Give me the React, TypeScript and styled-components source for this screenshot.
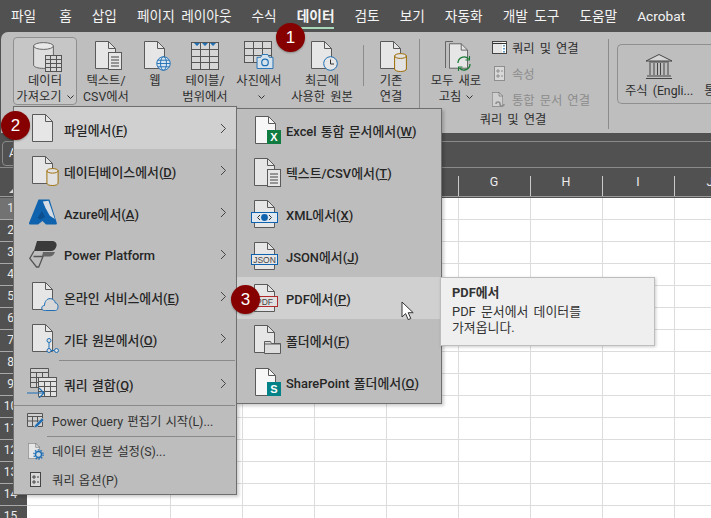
import * as React from 'react';
import styled, { createGlobalStyle } from 'styled-components';

const GlobalStyle = createGlobalStyle`
	html, body {
		margin: 0;
		padding: 0;
		width: 711px;
		height: 518px;
		overflow: hidden;
		background: #ffffff;
		font-family: Roboto, "Noto Sans CJK KR", "Liberation Sans", sans-serif;
	}
`

const Page = styled.div`
	position: relative;
	width: 711px;
	height: 518px;
	overflow: hidden;
	background: #515151;
	display: flex;
	flex-direction: column;
`

const TabBar = styled.div`
	height: 32px;
	flex: none;
	display: flex;
	align-items: center;
	padding: 0 0 1px 11px;
	gap: 20px;
	box-sizing: border-box;
`

const Tab = styled.div<{ $active?: boolean }>`
	position: relative;
	font-size: 13.7px;
	line-height: 20px;
	word-spacing: 3px;
	color: #f4f4f4;
	white-space: nowrap;
	font-weight: ${p => (p.$active ? 700 : 400)};

	&:first-child {
		margin-right: 3px;
	}

	&::after {
		content: '';
		display: ${p => (p.$active ? 'block' : 'none')};
		position: absolute;
		left: 0;
		right: 0;
		bottom: -3px;
		height: 2px;
		background: #a8d8b9;
	}
`

const Ribbon = styled.div`
	height: 101px;
	flex: none;
	margin-left: 1px;
	background: #bebebe;
	border-radius: 7px 0 0 0;
	box-sizing: border-box;
	padding: 5px 0 0 12px;
	display: flex;
	overflow: hidden;
`

const RibbonButton = styled.div<{ $w: number; $framed?: boolean }>`
	width: ${p => p.$w}px;
	height: 68px;
	flex: none;
	box-sizing: border-box;
	display: flex;
	flex-direction: column;
	align-items: center;
	border: 1px solid ${p => (p.$framed ? '#8f8f8f' : 'transparent')};
	border-radius: 4px;
	background: ${p => (p.$framed ? '#c6c6c6' : 'transparent')};
	font-size: 12.3px;
	line-height: 16px;
	word-spacing: 2px;
	color: #2f2f2f;
	text-align: center;
	white-space: nowrap;
`

const RibbonIcon = styled.div<{ $dx?: number }>`
	height: 35px;
	flex: none;
	display: flex;
	align-items: center;
	justify-content: center;
	margin-left: ${p => (p.$dx ?? 0) * 2}px;
`

const Caret = styled.svg`
	margin-left: 5px;
	vertical-align: 2px;
`

const Divider = styled.div<{ $h: number; $mt: number; $mx: number }>`
	width: 1px;
	height: ${p => p.$h}px;
	flex: none;
	background: #8c8c8c;
	margin: ${p => p.$mt}px ${p => p.$mx}px 0;
`

const QueryGroup = styled.div`
	flex: none;
	width: 180px;
	display: flex;
	flex-direction: column;
`

const QueryTop = styled.div`
	display: flex;
	height: 75px;
`

const SmallColumn = styled.div`
	display: flex;
	flex-direction: column;
	gap: 5px;
	margin-left: 2px;
`

const SmallRow = styled.div<{ $off?: boolean }>`
	height: 21px;
	display: flex;
	align-items: center;
	gap: 5px;
	font-size: 12.3px;
	word-spacing: 2px;
	white-space: nowrap;
	color: ${p => (p.$off ? '#8c8c8c' : '#2f2f2f')};
`

const SmallIcon = styled.div`
	width: 16px;
	flex: none;
	display: flex;
	justify-content: center;
`

const GroupLabel = styled.div`
	font-size: 12.3px;
	line-height: 16px;
	word-spacing: 2px;
	color: #2f2f2f;
	text-align: center;
`

const StockCard = styled.div`
	width: 140px;
	height: 60px;
	flex: none;
	margin: 7px 0 0 3px;
	box-sizing: border-box;
	border: 1px solid #8f8f8f;
	border-right: none;
	border-radius: 5px 0 0 5px;
	padding: 9px 0 4px 7px;
	display: flex;
	gap: 11px;
	font-size: 12.3px;
	line-height: 16px;
	word-spacing: 2px;
	color: #2f2f2f;
	white-space: nowrap;
`

const StockItem = styled.div`
	display: flex;
	flex-direction: column;
	align-items: center;
	justify-content: space-between;
`

const FormulaStrip = styled.div`
	position: relative;
	height: 35px;
	flex: none;
	box-sizing: border-box;
	padding-top: 8px;
	border-bottom: 1px solid #8a8a8a;
`

const FormulaLine = styled.div`
	height: 27px;
	border-top: 1px solid #8a8a8a;
	margin-left: 5px;
`

const NameBox = styled.div`
	position: absolute;
	left: 2px;
	top: 8px;
	width: 40px;
	height: 25px;
	box-sizing: border-box;
	border: 1px solid #8a8a8a;
	border-radius: 4px;
	background: #515151;
	color: #ececec;
	font-size: 12px;
	line-height: 23px;
	padding-left: 6px;
`

const ColumnHeader = styled.div`
	position: relative;
	height: 29px;
	flex: none;
	display: flex;
	background: #515151;
	border-bottom: 1px solid #9a9a9a;
	box-sizing: border-box;
	padding-left: 26px;
`

const CornerMark = styled.div`
	position: absolute;
	left: 9px;
	bottom: 3px;
	width: 0;
	height: 0;
	border-left: 5px solid transparent;
	border-bottom: 5px solid #d8d8d8;
`

const ColumnCell = styled.div`
	width: 72px;
	flex: none;
	box-sizing: border-box;
	color: #ececec;
	font-size: 12.5px;
	line-height: 28px;
	text-align: center;
	position: relative;

	&::before {
		content: '';
		position: absolute;
		left: 0;
		top: 8px;
		bottom: 0;
		width: 1px;
		background: #c9c9c9;
	}
`

const Sheet = styled.div`
	flex: 1;
	display: flex;
	min-height: 0;
	padding-top: 1px;
`

const RowHeader = styled.div`
	width: 27px;
	flex: none;
	display: flex;
	flex-direction: column;
`

const RowNumber = styled.div<{ $first?: boolean }>`
	height: 22px;
	flex: none;
	box-sizing: border-box;
	border-bottom: 1px solid #a8a8a8;
	background: ${p => (p.$first ? '#727272' : '#515151')};
	color: #ececec;
	font-size: 12px;
	line-height: 21px;
	padding-right: 6px;
	text-align: center;
`

const Cells = styled.div`
	flex: 1;
	background-color: #ffffff;
	background-image:
		linear-gradient(to right, #dcdcdc 1px, transparent 1px),
		linear-gradient(to bottom, #dcdcdc 1px, transparent 1px);
	background-size: 72px 22px;
	background-position: -1px -1px;
`

const Menu = styled.div<{ $x: number; $y: number; $w: number }>`
	position: absolute;
	left: ${p => p.$x}px;
	top: ${p => p.$y}px;
	width: ${p => p.$w}px;
	box-sizing: border-box;
	background: #bdbdbd;
	border: 1px solid #6e6e6e;
	box-shadow: 2px 2px 3px rgba(0, 0, 0, 0.2);
	display: flex;
	flex-direction: column;
`

const MenuRow = styled.div<{ $hot?: boolean; $pad: number; $h?: number }>`
	height: ${p => p.$h ?? 42}px;
	flex: none;
	display: flex;
	align-items: center;
	box-sizing: border-box;
	padding-left: ${p => p.$pad}px;
	background: ${p => (p.$hot ? '#d0d0d0' : 'transparent')};
`

const MenuIcon = styled.div<{ $shift?: number }>`
	width: 32px;
	flex: none;
	display: flex;
	align-items: center;
	margin-left: ${p => p.$shift ?? 0}px;
	margin-right: ${p => -(p.$shift ?? 0)}px;
`

const MenuLabel = styled.div<{ $drop?: number }>`
	font-size: 12.9px;
	font-weight: 500;
	color: #262626;
	white-space: nowrap;
	word-spacing: 1px;
	flex: 1;
	padding-top: ${p => p.$drop ?? 0}px;
`

const Key = styled.span`
	text-decoration: underline;
	text-underline-offset: 1px;
`

const Arrow = styled.svg`
	flex: none;
	margin-right: 9px;
`

const MenuRule = styled.div<{ $left: number; $top?: number }>`
	height: 1px;
	flex: none;
	margin-top: ${p => p.$top ?? 0}px;
	margin-left: ${p => p.$left}px;
	margin-right: 1px;
	background: #8a8a8a;
`

const FlatRow = styled.div<{ $h: number }>`
	height: ${p => p.$h}px;
	flex: none;
	display: flex;
	align-items: center;
	padding-left: 13px;
	gap: 8px;
	font-size: 12.4px;
	word-spacing: 1px;
	color: #333333;
	white-space: nowrap;
`

const FlatIcon = styled.div`
	width: 17px;
	flex: none;
	display: flex;
	justify-content: center;
`

const Tooltip = styled.div`
	position: absolute;
	left: 440px;
	top: 277px;
	width: 215px;
	height: 69px;
	box-sizing: border-box;
	background: #efefef;
	border: 1px solid #bdbdbd;
	box-shadow: 1px 1px 3px rgba(0, 0, 0, 0.2);
	padding: 6px 11px;
	color: #333333;
`

const TooltipTitle = styled.div`
	font-size: 12.9px;
	font-weight: 700;
	line-height: 17px;
	margin-bottom: 3px;
`

const TooltipBody = styled.div`
	font-size: 12.9px;
	line-height: 16px;
	word-spacing: 2px;
`

const Badge = styled.div<{ $x: number; $y: number }>`
	position: absolute;
	left: ${p => p.$x}px;
	top: ${p => p.$y}px;
	width: 29px;
	height: 29px;
	border-radius: 50%;
	background: #860000;
	color: #ffffff;
	font-family: "Liberation Sans", sans-serif;
	font-size: 17px;
	line-height: 29px;
	text-align: center;
	box-shadow: 0 1px 2px rgba(0, 0, 0, 0.3);
`

const Cursor = styled.svg`
	position: absolute;
	left: 401px;
	top: 301px;
`

const Stack = styled.div<{ $w: number; $h: number }>`
	position: relative;
	width: ${p => p.$w}px;
	height: ${p => p.$h}px;
	flex: none;
`

const Overlay = styled.div<{ $x: number; $y: number }>`
	position: absolute;
	left: ${p => p.$x}px;
	top: ${p => p.$y}px;
	line-height: 0;
`

const PageIcon = ({ fill = '#e6e6e6', w = 21, h = 28 }: { fill?: string; w?: number; h?: number }) => (
	<svg width={w} height={h} viewBox="0 0 21 28" style={{ display: 'block' }}>
		<path d="M.5.5h13l7 7v20H.5z" fill={fill} stroke="#5a5a5a" />
		<path d="M13.5.5v7h7" fill="none" stroke="#5a5a5a" />
	</svg>
)

const Cylinder = ({ w = 13, h = 19 }: { w?: number; h?: number }) => (
	<svg width={w} height={h} viewBox="0 0 13 19">
		<path d="M.6 3v13c0 1.5 2.6 2.5 5.9 2.5s5.9-1 5.9-2.5V3z" fill="#e2e2e2" stroke="#9c6a00" />
		<ellipse cx="6.5" cy="3" rx="5.9" ry="2.4" fill="#e2e2e2" stroke="#9c6a00" />
	</svg>
)

const TextLines = () => (
	<svg width="14" height="18" viewBox="0 0 14 18">
		<rect x=".5" y=".5" width="13" height="17" fill="#e6e6e6" stroke="#5a5a5a" />
		<path d="M3 5h8M3 8h8M3 11h8M3 14h8" stroke="#444" />
	</svg>
)

const LetterTile = ({ color, letter }: { color: string; letter: string }) => (
	<svg width="14" height="14" viewBox="0 0 14 14">
		<rect width="14" height="14" fill={color} />
		<text x="7" y="11" fontSize="11" fontWeight="700" textAnchor="middle" fill="#fff" fontFamily="Liberation Sans, sans-serif">{letter}</text>
	</svg>
)

const DatabaseFileIcon = () => (
	<Stack $w={28} $h={28}>
		<PageIcon />
		<Overlay $x={14} $y={12}><Cylinder h={18} /></Overlay>
	</Stack>
)

const AzureIcon = () => (
	<svg width="28" height="26" viewBox="0 0 28 26" style={{ display: 'block' }}>
		<path d="M9.500.5h11L27.800 24c.2.800-.2 1.500-1 1.500H17l-3.500-3.500-4.500 3.500H1c-.8 0-1.200-.7-1-1.500z" fill="#0f63ae" />
		<path d="M13.800 2.500l5.700-.8 6.300 18.300-5-3.200-4.300-7.800z" fill="#d6dde4" />
		<path d="M13 12l3 6-4.500 2.500-3-1.500z" fill="#0b4f90" />
	</svg>
)

const PowerIcon = () => (
	<svg width="28" height="28" viewBox="0 0 28 28" style={{ display: 'block' }}>
		<path d="M8 1h15c3.500 0 5 2.500 4.500 5-.6 3-3 5-5.500 5H5z" fill="#3a3a3a" />
		<path d="M14 12h12c-1 2.500-2.800 4.500-5 4.500h-8z" fill="#666666" />
		<path d="M5 11L.8 18.500 7.500 27h2.200L14 16.500H4.500" fill="none" stroke="#555555" strokeWidth="1.300" />
	</svg>
)

const CloudFileIcon = () => (
	<Stack $w={28} $h={28}>
		<PageIcon />
		<Overlay $x={9} $y={16}>
			<svg width="18" height="13" viewBox="0 0 18 13">
				<path d="M4.500 12.500H3.500c-3.700 0-3.700-5 0-5C3.500 3.500 6 .6 9 .6s4.800 2 5.400 4.400c3.500 0 3.500 7.500 0 7.500z" fill="#d8d8d8" stroke="#1f6fb5" />
			</svg>
		</Overlay>
	</Stack>
)

const NodesFileIcon = () => (
	<Stack $w={28} $h={28}>
		<PageIcon />
		<Overlay $x={12} $y={14}>
			<svg width="15" height="15" viewBox="0 0 15 15">
				<path d="M5 4.500v6M5 12.500h5" stroke="#1f6fb5" fill="none" />
				<circle cx="5" cy="2.500" r="2" fill="#ddd" stroke="#1f6fb5" />
				<circle cx="5" cy="12.500" r="2" fill="#ddd" stroke="#1f6fb5" />
				<circle cx="12.500" cy="12.500" r="2" fill="#ddd" stroke="#1f6fb5" />
			</svg>
		</Overlay>
	</Stack>
)

const CombineIcon = () => (
	<svg width="31" height="30" viewBox="0 0 31 30" style={{ display: 'block' }}>
		<path d="M3.500.5h18v4h-18zM3.500 4.500h18v15h-18zM3.500 9.500h18M3.500 14.500h18M9.500 4.500v15M15.500 4.500v15" fill="#d2d2d2" stroke="#555" />
		<path d="M11.500 9.500h18v19h-18z" fill="#e2e2e2" stroke="#555" />
		<path d="M11.500 9.500h18v4h-18zM11.500 18.500h18M11.500 23.500h18M17.500 13.500v15M23.500 13.500v15" fill="none" stroke="#555" />
		<path d="M0 25h16M12 20l5 5-5 5" fill="none" stroke="#1f6fb5" strokeWidth="1.200" />
	</svg>
)

const TileFileIcon = ({ color, letter }: { color: string; letter: string }) => (
	<Stack $w={28} $h={30}>
		<Overlay $x={1} $y={1}><PageIcon fill="#f7f7f7" /></Overlay>
		<Overlay $x={13} $y={15}><LetterTile color={color} letter={letter} /></Overlay>
	</Stack>
)

const TextFileIcon = () => (
	<Stack $w={28} $h={29}>
		<PageIcon />
		<Overlay $x={13} $y={11}><TextLines /></Overlay>
	</Stack>
)

const BandFileIcon = ({ label, color, fill }: { label: string; color: string; fill: string }) => (
	<Stack $w={28} $h={28}>
		<PageIcon />
		<Overlay $x={-3} $y={12}>
			<svg width="27" height="11" viewBox="0 0 27 11">
				<rect x=".5" y=".5" width="26" height="10" fill={fill} stroke={color} />
				<text x="13.500" y="9" fontSize="8.500" textAnchor="middle" fill="#444" fontFamily="Liberation Sans, sans-serif">{label}</text>
			</svg>
		</Overlay>
	</Stack>
)

const XmlFileIcon = () => (
	<Stack $w={28} $h={28}>
		<PageIcon />
		<Overlay $x={-3} $y={12}>
			<svg width="27" height="11" viewBox="0 0 27 11">
				<rect x=".5" y=".5" width="26" height="10" fill="#dfe8f0" stroke="#0f62ad" />
				<circle cx="13.500" cy="5.500" r="3.400" fill="#0f62ad" />
				<path d="M9 3L6.500 5.500 9 8M18 3l2.500 2.500L18 8" fill="none" stroke="#333" />
			</svg>
		</Overlay>
	</Stack>
)

const FolderFileIcon = () => (
	<Stack $w={28} $h={30}>
		<PageIcon />
		<Overlay $x={10} $y={16}>
			<svg width="17" height="13" viewBox="0 0 17 13">
				<path d="M.5 12.500v-12h6l1 2h9v10z" fill="#dcdcdc" stroke="#5a5a5a" />
				<path d="M.5 3h16" stroke="#5a5a5a" />
			</svg>
		</Overlay>
	</Stack>
)

const MenuArrow = () => (
	<Arrow width="7" height="11" viewBox="0 0 7 11">
		<path d="M1 1l4.500 4.500L1 10" fill="none" stroke="#444" />
	</Arrow>
)

const CaretIcon = () => (
	<Caret width="7" height="4" viewBox="0 0 7 4">
		<path d="M.5.500l3 3 3-3" fill="none" stroke="#333" />
	</Caret>
)

const GridIcon = ({ w, h, cols, rows }: { w: number; h: number; cols: number; rows: number }) => {
	const lines: string[] = []
	for (let i = 1; i < cols; i++) lines.push(`M${Math.round((i * w) / cols) + 0.5} 0v${h}`)
	for (let i = 1; i < rows; i++) lines.push(`M0 ${Math.round((i * h) / rows) + 0.5}h${w}`)
	return (
		<svg width={w + 1} height={h + 1} viewBox={`0 0 ${w + 1} ${h + 1}`} style={{ display: 'block' }}>
			<rect x=".5" y=".5" width={w} height={h} fill="#d6d6d6" stroke="#555" />
			<path d={lines.join('')} stroke="#555" fill="none" />
		</svg>
	)
}

const DataIcon = () => (
	<Stack $w={24} $h={28}>
		<svg width="21" height="27" viewBox="0 0 21 27" style={{ display: 'block' }}>
			<path d="M.6 4v19c0 2 4.400 3.400 9.900 3.400s9.900-1.400 9.900-3.400V4z" fill="#dedede" stroke="#666" />
			<ellipse cx="10.500" cy="4" rx="9.900" ry="3.400" fill="#e8e8e8" stroke="#666" />
		</svg>
		<Overlay $x={12} $y={13}><GridIcon w={16} h={16} cols={3} rows={4} /></Overlay>
	</Stack>
)

const TableIcon = () => (
	<Stack $w={29} $h={28}>
		<GridIcon w={27} h={27} cols={3} rows={4} />
		<Overlay $x={2} $y={1}>
			<svg width="24" height="4" viewBox="0 0 24 4">
				<path d="M1 0h6L4 3zM9 0h6l-3 3zM17 0h6l-3 3z" fill="#1f6fb5" />
			</svg>
		</Overlay>
	</Stack>
)

const WebFileIcon = () => (
	<Stack $w={28} $h={30}>
		<PageIcon />
		<Overlay $x={12} $y={15}>
			<svg width="15" height="15" viewBox="0 0 16 16">
				<circle cx="8" cy="8" r="7.200" fill="#d8e4ee" stroke="#1f6fb5" />
				<ellipse cx="8" cy="8" rx="3.200" ry="7.200" fill="none" stroke="#1f6fb5" />
				<path d="M1 8h14M2 4.500h12M2 11.500h12" stroke="#1f6fb5" fill="none" />
			</svg>
		</Overlay>
	</Stack>
)

const CameraIcon = () => (
	<Stack $w={31} $h={30}>
		<GridIcon w={27} h={21} cols={3} rows={3} />
		<Overlay $x={12} $y={13}>
			<svg width="18" height="15" viewBox="0 0 18 16">
				<path d="M.5 15.500v-12h4l1.500-3h6l1.500 3h4v12z" fill="#d5e2ec" stroke="#1f6fb5" />
				<circle cx="9" cy="9" r="3.500" fill="none" stroke="#1f6fb5" strokeWidth="1.300" />
			</svg>
		</Overlay>
	</Stack>
)

const ClockFileIcon = () => (
	<Stack $w={28} $h={30}>
		<PageIcon />
		<Overlay $x={12} $y={15}>
			<svg width="15" height="15" viewBox="0 0 15 15">
				<circle cx="7.500" cy="7.500" r="6.800" fill="#e6e6e6" stroke="#1f6fb5" />
				<path d="M7.500 3.500v4.500h3.500" fill="none" stroke="#333" />
			</svg>
		</Overlay>
	</Stack>
)

const ExistingIcon = () => (
	<Stack $w={28} $h={30}>
		<PageIcon />
		<Overlay $x={14} $y={12}><Cylinder h={19} /></Overlay>
	</Stack>
)

const RefreshIcon = () => (
	<Stack $w={28} $h={30}>
		<Overlay $x={0} $y={0}>
			<svg width="8" height="27" viewBox="0 0 8 27"><path d="M.5 27V.5H8" fill="none" stroke="#666" /></svg>
		</Overlay>
		<Overlay $x={4} $y={2}><PageIcon w={19} h={26} /></Overlay>
		<Overlay $x={11} $y={14}>
			<svg width="16" height="17" viewBox="0 0 16 17">
				<path d="M2 8a6 6 0 0 1 10.500-4M14 9a6 6 0 0 1-10.500 4" fill="none" stroke="#1a7a35" strokeWidth="1.300" />
				<path d="M13.500 1v4h-4M2.500 16v-4h4" fill="none" stroke="#1a7a35" strokeWidth="1.100" />
			</svg>
		</Overlay>
	</Stack>
)

const PaneIcon = () => (
	<svg width="15" height="13" viewBox="0 0 15 13">
		<rect x=".5" y=".5" width="14" height="12" fill="#e6e6e6" stroke="#444" />
		<rect x="10" y="1" width="4" height="11" fill="#fff" />
		<path d="M.5 2.500h14" stroke="#333" />
		<path d="M12 4v1.500M12 7v1.500M12 10v1.500" stroke="#1f6fb5" strokeWidth="1.400" />
	</svg>
)

const PropsIcon = ({ stroke = '#8e8e8e' }: { stroke?: string }) => (
	<svg width="11" height="15" viewBox="0 0 11 15" style={{ display: 'block' }}>
		<rect x=".5" y=".5" width="10" height="14" fill="#d8d8d8" stroke={stroke} />
		<path d="M3 4h2v2H3zM7 5h2M3 9h2v2H3zM7 10h2" fill="none" stroke={stroke} />
	</svg>
)

const LinkIcon = () => (
	<Stack $w={14} $h={16}>
		<PageIcon w={11} h={15} fill="#cfcfcf" />
		<Overlay $x={2} $y={8}>
			<svg width="12" height="8" viewBox="0 0 12 8"><path d="M2 4a2 2 0 0 1 4 0 2 2 0 0 0 4 0" fill="none" stroke="#8e8e8e" strokeWidth="1.600" /></svg>
		</Overlay>
	</Stack>
)

const BankIcon = () => (
	<svg width="28" height="25" viewBox="0 0 28 25" style={{ display: 'block' }}>
		<path d="M14 .5L27 7H1z" fill="#d6d6d6" stroke="#444" />
		<path d="M4 8h20M5 9v12M9 9v12M12.500 9v12M15.500 9v12M19 9v12M23 9v12M2 22h24M1 24.500h26" fill="none" stroke="#444" />
	</svg>
)

const EditorIcon = () => (
	<svg width="17" height="16" viewBox="0 0 17 16" style={{ display: 'block' }}>
		<path d="M.5.5h15v13H.5zM.5 3.500h15M.5 8h15M5.500 3.500v10M10.500 3.500v10" fill="#d0d0d0" stroke="#555" />
		<path d="M7 15l1-3 7-7 2 2-7 7z" fill="#1f6fb5" stroke="#bdbdbd" strokeWidth=".6" />
	</svg>
)

const SettingsFileIcon = () => (
	<Stack $w={16} $h={17}>
		<PageIcon w={12} h={16} />
		<Overlay $x={5} $y={6}>
			<svg width="11" height="11" viewBox="0 0 11 11">
				<circle cx="5.500" cy="5.500" r="3" fill="#cfd9e2" stroke="#1f6fb5" strokeWidth="1.400" />
				<circle cx="5.500" cy="5.500" r="4.600" fill="none" stroke="#1f6fb5" strokeDasharray="1.400 1.500" strokeWidth="1.400" />
			</svg>
		</Overlay>
	</Stack>
)

const tabs = ['파일', '홈', '삽입', '페이지 레이아웃', '수식', '데이터', '검토', '보기', '자동화', '개발 도구', '도움말', 'Acrobat']
const columns = ['', '', '', '', '', '', 'G', 'H', 'I', 'J']
const rows = Array.from({ length: 15 }, (_, i) => i + 1)

const primaryItems: { icon: React.ReactNode; label: string; hotkey?: string; hot?: boolean; shift?: number }[] = [
	{ icon: <PageIcon />, label: '파일에서', hotkey: 'F', hot: true },
	{ icon: <DatabaseFileIcon />, label: '데이터베이스에서', hotkey: 'D' },
	{ icon: <AzureIcon />, label: 'Azure에서', hotkey: 'A', shift: -3 },
	{ icon: <PowerIcon />, label: 'Power Platform', shift: -3 },
	{ icon: <CloudFileIcon />, label: '온라인 서비스에서', hotkey: 'E' },
	{ icon: <NodesFileIcon />, label: '기타 원본에서', hotkey: 'O' },
]

const fileItems: { icon: React.ReactNode; label: string; hotkey: string; hot?: boolean }[] = [
	{ icon: <TileFileIcon color="#107c41" letter="X" />, label: 'Excel 통합 문서에서', hotkey: 'W' },
	{ icon: <TextFileIcon />, label: '텍스트/CSV에서', hotkey: 'T' },
	{ icon: <XmlFileIcon />, label: 'XML에서', hotkey: 'X' },
	{ icon: <BandFileIcon label="JSON" color="#0f62ad" fill="#e6e6e6" />, label: 'JSON에서', hotkey: 'J' },
	{ icon: <BandFileIcon label="PDF" color="#b02a2a" fill="#e0e0e0" />, label: 'PDF에서', hotkey: 'P', hot: true },
	{ icon: <FolderFileIcon />, label: '폴더에서', hotkey: 'F' },
	{ icon: <TileFileIcon color="#038387" letter="S" />, label: 'SharePoint 폴더에서', hotkey: 'O' },
]

const Label = ({ text, hotkey, drop }: { text: string; hotkey?: string; drop?: number }) => (
	<MenuLabel $drop={drop}>
		{text}
		{hotkey && <>(<Key>{hotkey}</Key>)</>}
	</MenuLabel>
)

export default function App() {
	return (
		<Page>
			<GlobalStyle />
			<TabBar>
				{tabs.map(t => <Tab key={t} $active={t === '데이터'}>{t}</Tab>)}
			</TabBar>

			<Ribbon>
				<RibbonButton $w={64} $framed>
					<RibbonIcon><DataIcon /></RibbonIcon>
					<div>데이터</div>
					<div>가져오기<CaretIcon /></div>
				</RibbonButton>
				<RibbonButton $w={58}>
					<RibbonIcon $dx={3}><TextFileIcon /></RibbonIcon>
					<div>텍스트/</div>
					<div>CSV에서</div>
				</RibbonButton>
				<RibbonButton $w={40}>
					<RibbonIcon $dx={3}><WebFileIcon /></RibbonIcon>
					<div>웹</div>
				</RibbonButton>
				<RibbonButton $w={60}>
					<RibbonIcon><TableIcon /></RibbonIcon>
					<div>테이블/</div>
					<div>범위에서</div>
				</RibbonButton>
				<RibbonButton $w={48}>
					<RibbonIcon><CameraIcon /></RibbonIcon>
					<div>사진에서</div>
					<div><CaretIcon /></div>
				</RibbonButton>
				<RibbonButton $w={78}>
					<RibbonIcon $dx={3}><ClockFileIcon /></RibbonIcon>
					<div>최근에</div>
					<div>사용한 원본</div>
				</RibbonButton>
				<Divider $h={41} $mt={8} $mx={2} />
				<RibbonButton $w={50}>
					<RibbonIcon $dx={3}><ExistingIcon /></RibbonIcon>
					<div>기존</div>
					<div>연결</div>
				</RibbonButton>
				<Divider $h={90} $mt={2} $mx={3} />
				<QueryGroup>
					<QueryTop>
						<RibbonButton $w={66}>
							<RibbonIcon $dx={3}><RefreshIcon /></RibbonIcon>
							<div>모두 새로</div>
							<div>고침<CaretIcon /></div>
						</RibbonButton>
						<SmallColumn>
							<SmallRow><SmallIcon><PaneIcon /></SmallIcon>쿼리 및 연결</SmallRow>
							<SmallRow $off><SmallIcon><PropsIcon /></SmallIcon>속성</SmallRow>
							<SmallRow $off><SmallIcon><LinkIcon /></SmallIcon>통합 문서 연결</SmallRow>
						</SmallColumn>
					</QueryTop>
					<GroupLabel>쿼리 및 연결</GroupLabel>
				</QueryGroup>
				<Divider $h={90} $mt={2} $mx={5} />
				<StockCard>
					<StockItem><BankIcon />주식 (Engli...</StockItem>
					<StockItem><span />통화</StockItem>
				</StockCard>
			</Ribbon>

			<FormulaStrip>
				<FormulaLine />
				<NameBox>A1</NameBox>
			</FormulaStrip>

			<ColumnHeader>
				<CornerMark />
				{columns.map((c, i) => <ColumnCell key={i}>{c}</ColumnCell>)}
			</ColumnHeader>

			<Sheet>
				<RowHeader>
					{rows.map(r => <RowNumber key={r} $first={r === 1}>{r}</RowNumber>)}
				</RowHeader>
				<Cells />
			</Sheet>

			<Menu $x={13} $y={106} $w={224}>
				{primaryItems.map(item => (
					<MenuRow key={item.label} $hot={item.hot} $pad={18}>
						<MenuIcon $shift={item.shift}>{item.icon}</MenuIcon>
						<Label text={item.label} hotkey={item.hotkey} drop={3} />
						<MenuArrow />
					</MenuRow>
				))}
				<MenuRule $left={45} $top={1} />
				<MenuRow $pad={18} $h={44}>
					<MenuIcon $shift={-5}><CombineIcon /></MenuIcon>
					<Label text="쿼리 결합" hotkey="Q" drop={3} />
					<MenuArrow />
				</MenuRow>
				<MenuRule $left={0} />
				<FlatRow $h={30}><FlatIcon><EditorIcon /></FlatIcon>Power Query 편집기 시작(L)...</FlatRow>
				<MenuRule $left={33} />
				<FlatRow $h={28}><FlatIcon><SettingsFileIcon /></FlatIcon>데이터 원본 설정(S)...</FlatRow>
				<FlatRow $h={29}><FlatIcon><PropsIcon stroke="#444" /></FlatIcon>쿼리 옵션(P)</FlatRow>
			</Menu>

			<Menu $x={236} $y={108} $w={206}>
				{fileItems.map(item => (
					<MenuRow key={item.label} $hot={item.hot} $pad={17}>
						<MenuIcon>{item.icon}</MenuIcon>
						<Label text={item.label} hotkey={item.hotkey} />
					</MenuRow>
				))}
			</Menu>

			<Tooltip>
				<TooltipTitle>PDF에서</TooltipTitle>
				<TooltipBody>PDF 문서에서 데이터를<br />가져옵니다.</TooltipBody>
			</Tooltip>

			<Cursor width="14" height="20" viewBox="0 0 14 20">
				<path d="M1 1v15l3.600-3.400 2.600 6 2.600-1.100-2.600-5.800h5z" fill="#ffffff" stroke="#333333" />
			</Cursor>

			<Badge $x={276} $y={23}>1</Badge>
			<Badge $x={1} $y={111}>2</Badge>
			<Badge $x={231} $y={285}>3</Badge>
		</Page>
	)
}
